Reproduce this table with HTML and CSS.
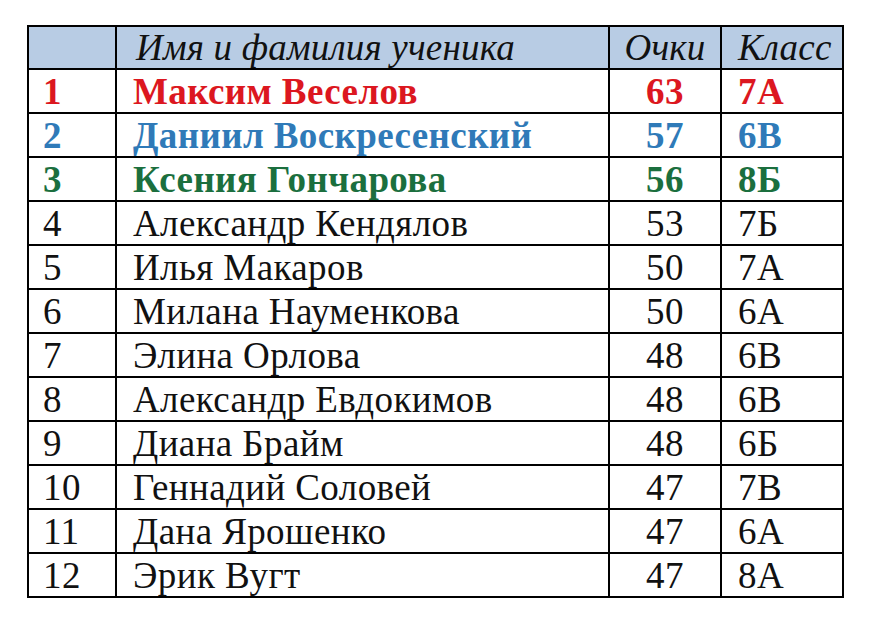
FILE: index.html
```html
<!DOCTYPE html>
<html lang="ru">
<head>
<meta charset="utf-8">
<link rel="stylesheet" href="styles.css">
</head>
<body>
<div class="page">
<table class="results">
<thead>
<tr><th class="num"></th><th class="name">Имя и фамилия ученика</th><th class="score">Очки</th><th class="cls">Класс</th></tr>
</thead>
<tbody>
<tr class="top red"><td class="num">1</td><td class="name">Максим Веселов</td><td class="score">63</td><td class="cls">7А</td></tr>
<tr class="top blue"><td class="num">2</td><td class="name">Даниил Воскресенский</td><td class="score">57</td><td class="cls">6В</td></tr>
<tr class="top green"><td class="num">3</td><td class="name">Ксения Гончарова</td><td class="score">56</td><td class="cls">8Б</td></tr>
<tr><td class="num">4</td><td class="name">Александр Кендялов</td><td class="score">53</td><td class="cls">7Б</td></tr>
<tr><td class="num">5</td><td class="name">Илья Макаров</td><td class="score">50</td><td class="cls">7А</td></tr>
<tr><td class="num">6</td><td class="name">Милана Науменкова</td><td class="score">50</td><td class="cls">6А</td></tr>
<tr><td class="num">7</td><td class="name">Элина Орлова</td><td class="score">48</td><td class="cls">6В</td></tr>
<tr><td class="num">8</td><td class="name">Александр Евдокимов</td><td class="score">48</td><td class="cls">6В</td></tr>
<tr><td class="num">9</td><td class="name">Диана Брайм</td><td class="score">48</td><td class="cls">6Б</td></tr>
<tr><td class="num">10</td><td class="name">Геннадий Соловей</td><td class="score">47</td><td class="cls">7В</td></tr>
<tr><td class="num">11</td><td class="name">Дана Ярошенко</td><td class="score">47</td><td class="cls">6А</td></tr>
<tr><td class="num">12</td><td class="name">Эрик Вугт</td><td class="score">47</td><td class="cls">8А</td></tr>
</tbody>
</table>
</div>
</body>
</html>
```
FILE: styles.css
```css
html, body {
  margin: 0;
  padding: 0;
  background: #ffffff;
}
.page {
  width: 886px;
  height: 622px;
  padding: 25px 0 0 27px;
  box-sizing: border-box;
  font-family: "Liberation Serif", "Times New Roman", serif;
}
.results {
  border-collapse: collapse;
  table-layout: fixed;
  width: 817px;
  border: 2px solid #000;
}
.results th, .results td {
  font-family: "Liberation Serif", "Times New Roman", serif;
  font-size: 37px;
  letter-spacing: 0.4px;
  color: #111111;
  border: 2px solid #000;
  padding: 0;
  height: 42px;
  line-height: 1;
  white-space: nowrap;
  vertical-align: middle;
}
.results thead th {
  background: #b8cce4;
  font-weight: normal;
  font-style: italic;
  letter-spacing: 0.2px;
  height: 41px;
}
.results .num { width: 88px; text-align: left; padding-left: 14px; box-sizing: border-box; }
.results .name { width: 493px; text-align: left; padding-left: 16px; box-sizing: border-box; }
.results th.name { padding-left: 19px; }
.results .score { width: 110px; text-align: center; }
.results .cls { text-align: left; padding-left: 16px; }
.results th.cls { padding-left: 16px; }
.results .top td { font-weight: bold; }
.results .red td { color: #dc1720; }
.results .blue td { color: #2f7ab8; }
.results .green td { color: #1b6f3e; }
```
